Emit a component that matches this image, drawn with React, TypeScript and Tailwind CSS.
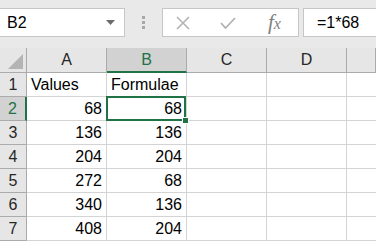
import React from "react";

const rows: [string, string, string][] = [
  ["1", "Values", "Formulae"],
  ["2", "68", "68"],
  ["3", "136", "136"],
  ["4", "204", "204"],
  ["5", "272", "68"],
  ["6", "340", "136"],
  ["7", "408", "204"],
];

const cols = ["A", "B", "C", "D", ""];

export default function App() {
  return (
    <div className="w-[376px] h-[244px] overflow-hidden bg-white text-black [font-family:'Liberation_Sans',Arial,sans-serif]">
      {/* formula bar */}
      <div className="h-[48px] bg-[#e9e9e9] flex items-start pt-[8px]">
        <div className="w-[126px] h-[29px] -ml-px bg-white border border-[#c6c6c6] flex items-center justify-between pl-[7px] pr-[9px]">
          <span className="text-[16px]">B2</span>
          <svg width="9" height="5" viewBox="0 0 9 5">
            <path d="M0 0h9L4.5 5z" fill="#6b6b6b" />
          </svg>
        </div>
        <div className="w-[37px] h-[29px] flex flex-col items-center justify-center gap-[2px]">
          <span className="w-[3px] h-[3px] bg-[#a8a8a8]" />
          <span className="w-[3px] h-[3px] bg-[#a8a8a8]" />
          <span className="w-[3px] h-[3px] bg-[#a8a8a8]" />
        </div>
        <div className="w-[137px] h-[29px] bg-white border border-[#c6c6c6] flex items-center">
          <div className="w-[40px] flex justify-center">
            <svg width="14" height="14" viewBox="0 0 14 14">
              <path d="M1 1l12 12M13 1L1 13" stroke="#b3b3b3" strokeWidth="1.6" />
            </svg>
          </div>
          <div className="w-[50px] flex justify-center">
            <svg width="16" height="12" viewBox="0 0 16 12">
              <path d="M1 6l4.5 5L15 1" stroke="#b3b3b3" strokeWidth="1.8" fill="none" />
            </svg>
          </div>
          <div className="flex-1 flex justify-center pr-[2px]">
            <span className="italic text-[21px] leading-none text-[#7f7f7f] [font-family:'Liberation_Serif',serif]">
              f<span className="text-[16px]">x</span>
            </span>
          </div>
        </div>
        <div className="ml-[4px] flex-1 h-[29px] bg-white border border-[#c6c6c6] border-r-0 flex items-center pl-[13px]">
          <span className="text-[16px]">=1*68</span>
        </div>
      </div>

      {/* sheet */}
      <div className="grid grid-cols-[27px_80px_80px_80px_80px_1fr]">
        <div className="h-[25px] bg-[#e6e6e6] border-r border-b border-[#ababab] relative">
          <svg className="absolute right-[3px] bottom-[3px]" width="15" height="15" viewBox="0 0 15 15">
            <path d="M15 0V15H0z" fill="#b4b4b4" />
          </svg>
        </div>
        {cols.map((c) => {
          const sel = c === "B";
          return (
            <div
              key={c || "e"}
              className={
                sel
                  ? "h-[25px] bg-[#d2d2d2] border-r border-[#ababab] border-b-2 border-b-[#217346] flex items-center justify-center text-[16px] text-[#217346]"
                  : "h-[25px] bg-[#e6e6e6] border-r border-b border-[#ababab] flex items-center justify-center text-[16px] text-[#262626]"
              }
            >
              {c}
            </div>
          );
        })}
        {rows.map(([n, a, b]) => {
          const sel = n === "2";
          const num = n !== "1";
          return (
            <React.Fragment key={n}>
              <div
                className={
                  sel
                    ? "h-[24px] bg-[#d2d2d2] border-r-2 border-r-[#217346] border-b border-[#ababab] flex items-center justify-center text-[16px] text-[#217346]"
                    : "h-[24px] bg-[#e6e6e6] border-r border-b border-[#ababab] flex items-center justify-center text-[16px] text-[#262626]"
                }
              >
                {n}
              </div>
              <div
                className={
                  "h-[24px] border-r border-b border-[#d4d4d4] flex items-center text-[16px] px-[4px] " +
                  (num ? "justify-end" : "justify-start")
                }
              >
                {a}
              </div>
              <div
                className={
                  "relative h-[24px] border-r border-b border-[#d4d4d4] flex items-center text-[16px] px-[4px] " +
                  (num ? "justify-end" : "justify-start")
                }
              >
                {b}
                {sel && (
                  <>
                    <div className="absolute -left-px -top-px right-0 -bottom-px border-2 border-[#217346]" />
                    <div className="absolute z-10 -right-[3px] -bottom-[4px] w-[7px] h-[7px] bg-[#217346] border border-white" />
                  </>
                )}
              </div>
              <div className="h-[24px] border-r border-b border-[#d4d4d4]" />
              <div className="h-[24px] border-r border-b border-[#d4d4d4]" />
              <div className="h-[24px] border-b border-[#d4d4d4]" />
            </React.Fragment>
          );
        })}
      </div>
    </div>
  );
}
